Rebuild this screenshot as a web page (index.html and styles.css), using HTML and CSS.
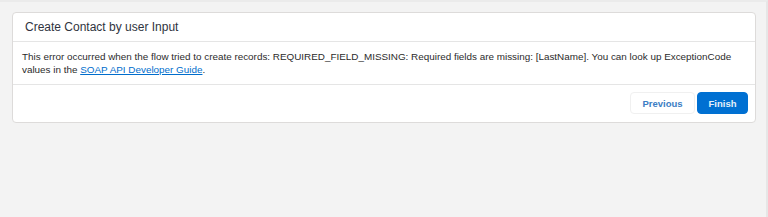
FILE: index.html
```html
<!DOCTYPE html>
<html>
<head>
<meta charset="utf-8">
<link rel="stylesheet" href="styles.css">
</head>
<body>
<div class="page">
  <div class="card">
    <div class="card-header">Create Contact by user Input</div>
    <div class="card-body">This error occurred when the flow tried to create records: REQUIRED_FIELD_MISSING: Required fields are missing: [LastName]. You can look up ExceptionCode values in the <a class="link" href="#">SOAP API Developer Guide</a>.</div>
    <div class="card-footer">
      <button class="btn btn-neutral">Previous</button>
      <button class="btn btn-brand">Finish</button>
    </div>
  </div>
</div>
</body>
</html>
```

FILE: styles.css
```css
html, body {
  margin: 0;
  padding: 0;
  background: #f3f3f3;
}
body {
  width: 768px;
  height: 217px;
  overflow: hidden;
  font-family: "Liberation Sans", Arial, sans-serif;
  color: #3e3e3c;
}
.page {
  padding: 10px 12px 0 12px;
  border-top: 2px solid #ebebeb;
  border-right: 2px solid #e6e6e6;
  box-sizing: border-box;
  height: 217px;
}
.card {
  width: 744px;
  background: #fff;
  border: 1px solid #dddbda;
  border-radius: 4px;
  box-sizing: border-box;
}
.card-header {
  height: 28px;
  line-height: 29px;
  padding-left: 12px;
  font-size: 12px;
  color: #2f3340;
  border-bottom: 1px solid #e5e5e5;
}
.card-body {
  padding: 8px 10px 8px 9px;
  font-size: 9.9px;
  line-height: 13px;
  color: #2b2b2b;
  border-bottom: 1px solid #e5e5e5;
}
.link {
  color: #006dcc;
  text-decoration: underline;
}
.card-footer {
  display: flex;
  justify-content: flex-end;
  gap: 2px;
  padding: 7px 7px 8px 0;
}
.btn {
  height: 22px;
  font-family: "Liberation Sans", Arial, sans-serif;
  font-size: 9.5px;
  font-weight: bold;
  border-radius: 4px;
  padding: 0;
  cursor: pointer;
}
.btn-neutral {
  width: 65px;
  background: #fff;
  color: #3b7dc4;
  border: 1px solid #f0f0f0;
}
.btn-brand {
  width: 51px;
  background: #0070d2;
  color: #e6f0fa;
  border: 1px solid #0070d2;
}
```
